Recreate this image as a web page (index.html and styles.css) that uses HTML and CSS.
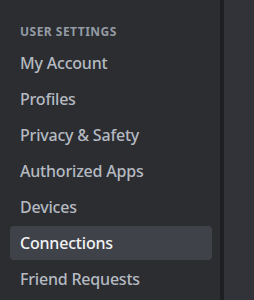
FILE: index.html
```html
<!DOCTYPE html>
<html lang="en">
<head>
    <meta charset="UTF-8">
    <meta name="viewport" content="width=device-width, initial-scale=1.0">
    <title>User Settings</title>
    <link rel="stylesheet" href="styles.css">
</head>
<body>
    <div class="layout">
        <nav class="sidebar">
            <div class="section-header">User Settings</div>
            <div class="nav-item">My Account</div>
            <div class="nav-item">Profiles</div>
            <div class="nav-item">Privacy &amp; Safety</div>
            <div class="nav-item">Authorized Apps</div>
            <div class="nav-item">Devices</div>
            <div class="nav-item selected">Connections</div>
            <div class="nav-item">Friend Requests</div>
        </nav>
        <div class="divider"></div>
        <main class="content"></main>
    </div>
</body>
</html>
```

FILE: styles.css
```css
* {
    margin: 0;
    padding: 0;
    box-sizing: border-box;
}

body {
    font-family: 'Noto Sans', sans-serif;
    background: #313338;
    height: 100vh;
    overflow: hidden;
}

.layout {
    display: flex;
    height: 100%;
}

.sidebar {
    width: 220px;
    flex-shrink: 0;
    background: #2b2d31;
    padding: 24px 8px 0 10px;
}

.divider {
    width: 4px;
    flex-shrink: 0;
    background: #1e1f22;
}

.content {
    flex: 1;
    background: #313338;
}

.section-header {
    font-size: 12px;
    line-height: 16px;
    font-weight: 700;
    text-transform: uppercase;
    letter-spacing: 0.04em;
    color: #949ba4;
    padding: 0 10px;
    margin-bottom: 6px;
}

.nav-item {
    height: 34px;
    margin-bottom: 2px;
    padding: 0 10px;
    display: flex;
    align-items: center;
    font-size: 16px;
    font-weight: 500;
    letter-spacing: -0.2px;
    color: #b5bac1;
    border-radius: 4px;
    cursor: pointer;
}

.nav-item:hover {
    background: #35373c;
}

.nav-item.selected {
    background: #404249;
    color: #f2f3f5;
}
```
